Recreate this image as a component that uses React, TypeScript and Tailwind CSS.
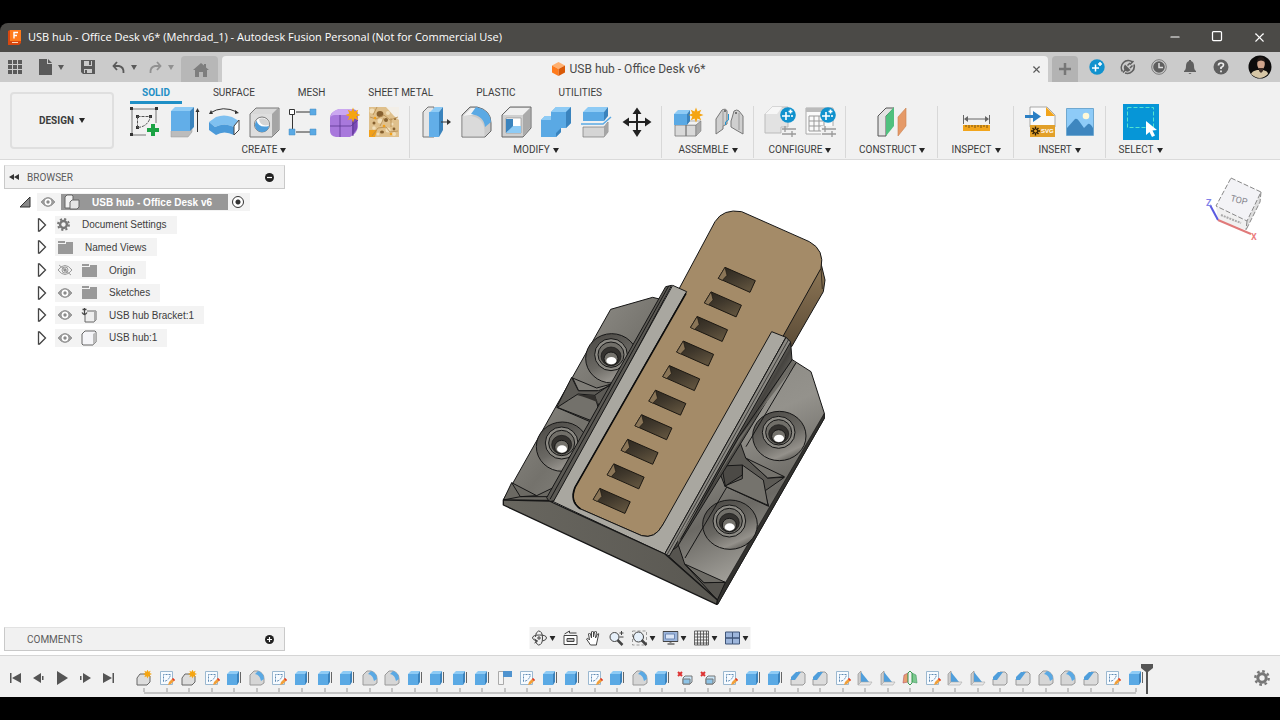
import React from 'react';
import { X, Minus, Square } from 'lucide-react';

type IconProps = { className?: string };

const Caret: React.FC<IconProps> = ({ className = 'text-neutral-800' }) => (
  <svg viewBox="0 0 6 5" className={`w-1.5 h-[5px] shrink-0 ${className}`} fill="currentColor"><path d="M0 0h6L3 5z" /></svg>
);

const Svg32: React.FC<{ children: React.ReactNode }> = ({ children }) => (
  <svg viewBox="0 0 32 32" className="w-8 h-8" fill="none">{children}</svg>
);

/* ---------- Ribbon icons ---------- */

const SketchIcon = () => (
  <Svg32>
    <path d="M4 3h24v14M4 3v26h14" stroke="#777" />
    <g fill="#333"><path d="M2 1h3v3H2zM27 1h3v3h-3zM2 27h3v3H2zM8 9h3v3H8zM21 9h3v3h-3zM8 20h3v3H8z" /></g>
    <path d="M9.500 10.500v11M9.500 10.500h13M10 21.500q10-1 12.500-11" stroke="#555" strokeDasharray="3 1" />
    <path d="M23 18h4v4h4v4h-4v4h-4v-4h-4v-4h4z" fill="#1ba344" />
  </Svg32>
);
const ExtrudeIcon = () => (
  <Svg32>
    <path d="M3 25l4-3h17v4l-4 5H3z" fill="#bcbcbc" stroke="#999" strokeWidth=".5" />
    <path d="M3 5l4-4h19l-4 4z" fill="#8ecbf5" />
    <path d="M3 5h19v20H3z" fill="#62aee8" />
    <path d="M22 5l4-4v20l-4 4z" fill="#3a83bd" />
    <path d="M29.500 26V4" stroke="#333" />
    <path d="M27.500 6l2-4 2 4z" fill="#333" />
  </Svg32>
);
const RevolveIcon = () => (
  <Svg32>
    <path d="M2 7q13-8 27-1" stroke="#333" />
    <path d="M1 8l2-4 2 4zM27 4l4 3-4 1z" fill="#333" />
    <path d="M1 16l7-5q8-3 16 0l7 4-5 6q-10-5-19 0z" fill="#7fc0f0" />
    <path d="M1 16l6 5q9-5 19 0v8q-10-5-18 0l-7-5z" fill="#4b9ad9" />
    <path d="M26 20l5-6v10l-5 5z" fill="#fff" stroke="#444" />
  </Svg32>
);
const HoleIcon = () => (
  <Svg32>
    <path d="M2 8l6-6h23v22l-7 7H2z" fill="#d8d8d8" stroke="#777" />
    <path d="M24 8l6-6v22l-6 7z" fill="#a5a5a5" />
    <path d="M3 8h21v22H3z" fill="#dedede" />
    <circle cx="14" cy="18.500" r="7.500" fill="#fff" stroke="#777" />
    <path d="M8.500 14.500q2 8 12.500 5.500a7 7 0 0 1-14 -2z" fill="#4f9edb" />
    <path d="M11 13q1 8 10 6a7 7 0 0 0-10-6z" fill="#d4d4d4" />
  </Svg32>
);
const PatternIcon = () => (
  <Svg32>
    <path d="M8 6h16M4.500 9v14M8 26h16" stroke="#333" />
    <path d="M1.500 3.500h5v5h-5z" fill="#fff" stroke="#333" />
    <path d="M22 3h6v6h-6zM22 23h6v6h-6zM1 23h6v6H1z" fill="#5aa9e4" stroke="#4b8dc0" strokeWidth=".5" />
  </Svg32>
);
const Burst = ({ x, y, r = 1 }: { x: number; y: number; r?: number }) => (
  <path transform={`translate(${x} ${y}) scale(${r})`} fill="#f5a512"
    d="M0-7.500L1.500-3.600 5.300-5.300 3.600-1.500 7.500 0 3.600 1.500 5.300 5.300 1.500 3.600 0 7.500-1.500 3.600-5.300 5.300-3.600 1.500-7.500 0-3.600-1.500-5.300-5.300-1.500-3.600z" />
);
const FormIcon = () => (
  <Svg32>
    <path d="M2 12q0-5 5-7l4-2h14q5 1 5 5v13q-1 5-5 8l-3 2H8q-6-1-6-6z" fill="#a878dc" />
    <path d="M2 12q2-8 9-9h14l-5 6H7q-4 0-5 3z" fill="#cba8f0" />
    <path d="M24 12l5-6v17l-5 7z" fill="#7a4bb5" />
    <path d="M12 9v22M2 20h21l7-6M25 8v22" stroke="#5c3690" strokeWidth=".8" />
    <Burst x={25} y={9} />
  </Svg32>
);
const VolumetricIcon = () => (
  <Svg32>
    <path d="M1 1h30v30H1z" fill="#dfc08c" />
    <path d="M18 1h13v13l-5-4z" fill="#f3efe8" />
    <path d="M1 24h8l-2 7H1z" fill="#f2a019" />
    <g fill="#86602f"><ellipse cx="12" cy="8" rx="3.400" ry="3" /><circle cx="18" cy="14" r="2" /><circle cx="6" cy="17" r="1.500" /><circle cx="26" cy="23" r="1.400" /><ellipse cx="14" cy="26" rx="2" ry="1.500" /><circle cx="27" cy="13" r="1" /></g>
    <g fill="#f1dfbb"><circle cx="4" cy="5" r="2.500" /><circle cx="12" cy="15" r="2.500" /><circle cx="20" cy="24" r="2.500" /><circle cx="20" cy="7" r="2" /><circle cx="6" cy="22" r="1.800" /><circle cx="26" cy="28" r="2" /><circle cx="24" cy="18" r="1.500" /><circle cx="10" cy="28" r="1.500" /></g>
    <g stroke="#b58a4c" strokeWidth=".8"><path d="M2 11l6 2 8-4 6 5 8-3M4 30l6-8 8-1 4 5 8-1M9 1l-4 8M16 12l-4 8M23 12v9" /></g>
    <g fill="#f2a019"><circle cx="7" cy="12" r="1.300" /><circle cx="16" cy="20" r="1.300" /><circle cx="23" cy="28" r="1.300" /></g>
  </Svg32>
);
const PressPullIcon = () => (
  <Svg32>
    <path d="M3 6l5-5h6v30H3z" fill="#e5e5e5" stroke="#777" />
    <path d="M10 6l5-5h8l-4 5z" fill="#8ecbf5" />
    <path d="M9 6h10v25H9z" fill="#62aee8" />
    <path d="M19 6l4-5v23l-4 7z" fill="#3a83bd" />
    <path d="M21 16h7" stroke="#333" />
    <path d="M27 13l4 3-4 3z" fill="#333" />
  </Svg32>
);
const FilletIcon = () => (
  <Svg32>
    <path d="M2 9l8-8h7q14 3 14 16v8l-6 6H2z" fill="#c9c9c9" stroke="#666" />
    <path d="M3 10l8-8h6l-4 7z" fill="#f2f2f2" />
    <path d="M2.500 10h9q12 2 13 14v6.500h-22z" fill="#dadada" />
    <path d="M11 8l5-7q14 3 15 15l-6 5Q24 10 11 8z" fill="#5aa9e4" />
  </Svg32>
);
const ShellIcon = () => (
  <Svg32>
    <path d="M2 9l8-8h21v21l-8 9H2z" fill="#cfcfcf" stroke="#666" />
    <path d="M3 9l7-7h20l-7 7z" fill="#efefef" />
    <path d="M23 9l7-7v20l-7 8z" fill="#aaa" />
    <path d="M6 12h15v15H6z" fill="#fff" stroke="#888" strokeWidth=".6" />
    <path d="M6 13h7v8l-7 6z" fill="#3a83bd" /><path d="M13 20h8v7H6z" fill="#8ecbf5" />
  </Svg32>
);
const CombineIcon = () => (
  <Svg32>
    <path d="M11 6l5-5h15v16l-5 5h-5v4l-5 5H1V14l4-4h6z" fill="#5aa9e4" />
    <path d="M11 6l5-5h15l-5 5zM1 14l4-4h6v4z" fill="#8ecbf5" />
    <path d="M26 6l5-5v16l-5 5zM16 27l5-5v4l-5 5z" fill="#3a83bd" />
  </Svg32>
);
const SplitIcon = () => (
  <Svg32>
    <path d="M3 6l5-5h20l-4 5z" fill="#8ecbf5" />
    <path d="M3 6h21v9H3z" fill="#5aa9e4" /><path d="M24 6l4-5v9l-4 5z" fill="#3a83bd" />
    <path d="M1 18h22l8-7" stroke="#5aa9e4" strokeWidth="1.500" />
    <path d="M3 21h21l4-5v10l-4 5H3z" fill="#d5d5d5" stroke="#777" strokeWidth=".7" />
    <path d="M24 21l4-5v10l-4 5z" fill="#a5a5a5" />
  </Svg32>
);
const MoveIcon = () => (
  <Svg32>
    <path d="M17 6v21M6 16h22" stroke="#222" strokeWidth="2" />
    <path d="M12.500 8L17 1.500 21.500 8zM12.500 24l4.500 7 4.500-7zM9 11.500L2.500 16 9 20.500zM25 11.500l6.500 4.500-6.500 4.500z" fill="#222" />
  </Svg32>
);
const ComponentIcon = () => (
  <Svg32>
    <path d="M3 19h11v11H3zM14 19h10v11H14z" fill="#d9d9d9" stroke="#777" strokeWidth=".8" />
    <path d="M14 19l4-4h11l-5 4z" fill="#f2f2f2" stroke="#777" strokeWidth=".5" />
    <path d="M24 19l5-4v10l-5 5z" fill="#aaa" stroke="#777" strokeWidth=".5" />
    <path d="M2 8l4-4h12l-3 4z" fill="#8ecbf5" /><path d="M2 8h13v11H2z" fill="#5aa9e4" /><path d="M15 8l3-4v11l-3 4z" fill="#3a83bd" />
    <Burst x={24} y={9} />
  </Svg32>
);
const JointIcon = () => (
  <Svg32>
    <path d="M4 13l6-9q4-2 5 1v13l-4 2v3l-7 5z" fill="#cfcfcf" stroke="#777" />
    <path d="M20 12l2-7q3-2 5 0l4 5v18l-7-4-5-3v-6z" fill="#cfcfcf" stroke="#777" />
    <path d="M11 5v15M27 7v17" stroke="#999" />
    <path d="M13.500 19v-3l3-2V8" stroke="#2196d3" />
    <circle cx="13" cy="5" r="1" fill="#555" /><circle cx="24" cy="7" r="1" fill="#555" />
  </Svg32>
);
const Plus2 = () => (
  <g><circle cx="24" cy="9" r="7.800" fill="#1192ce" /><path d="M22 6v8M18 10h8M26.500 3.500v4M24.500 5.500h4M28 9v2" stroke="#fff" strokeWidth="1.600" /></g>
);
const Sliders = () => <path d="M18 23h14M18 28h14M21 20v6M28 25v6" stroke="#999" strokeWidth="1.300" />;
const ConfigureIcon = () => (
  <Svg32>
    <path d="M1 8l7-7h16v20h-7v6H1z" fill="#e2e2e2" stroke="#bbb" />
    <path d="M1 8l7-7h10l-5 7z" fill="#f6f6f6" />
    <Sliders /><Plus2 />
  </Svg32>
);
const ConfigTableIcon = () => (
  <Svg32>
    <path d="M2 2h27v26H2z" fill="#fafafa" stroke="#aaa" />
    <path d="M2 2h27v4H2z" fill="#bbb" />
    <path d="M5 10h17M5 15h14M5 20h14M5 25h12M5 10v15M10 10v15M15 10v15M20 10v10" stroke="#999" />
    <path d="M17 20h15v12H17z" fill="#f1f1f1" />
    <Sliders /><Plus2 />
  </Svg32>
);
const PlaneIcon = () => (
  <Svg32>
    <path d="M2 10l8-8h8L10 10v20H2z" fill="#e3e3e3" stroke="#555" />
    <path d="M10 10l8-9v19l-8 10z" fill="#4fc07d" />
    <path d="M22 11l8-9v18l-8 10z" fill="#e59a68" stroke="#c9824f" strokeWidth=".6" />
  </Svg32>
);
const MeasureIcon = () => (
  <Svg32>
    <path d="M3.500 9v9M29.500 9v9M6 13h22" stroke="#666" />
    <path d="M4 13l4-3v6zM29 13l-4-3v6z" fill="#666" />
    <path d="M3 19h27v6H3z" fill="#f2a51c" />
    <path d="M6 19v2M9 19v3M12 19v2M15 19v3M18 19v2M21 19v3M24 19v2M27 19v3" stroke="#7b5310" />
  </Svg32>
);
const InsertSvgIcon = () => (
  <Svg32>
    <path d="M6 1h17l8 8v12H6z" fill="#fafafa" stroke="#888" strokeWidth=".7" />
    <path d="M22 1l9 9h-9z" fill="#f2a51c" />
    <path d="M1 9h8V5l8 5.500L9 16v-4H1z" fill="#2b7fc4" />
    <path d="M6 19h25v12H6z" fill="#e2a02a" />
    <path d="M11.500 20.500v9M7 25h9M8.500 22l6 6M14.500 22l-6 6" stroke="#2b1c05" strokeWidth="1.400" />
    <circle cx="11.500" cy="25" r="2" fill="#e2a02a" stroke="#2b1c05" />
    <text x="17" y="27" fontSize="6" fontWeight="700" fill="#fff" fontFamily="Liberation Sans, sans-serif">SVG</text>
  </Svg32>
);
const CanvasIcon = () => (
  <Svg32>
    <path d="M2.500 2.500h27v27h-27z" fill="#8ecbf8" stroke="#6fa8d0" />
    <path d="M3 22l8-9q2-1 4 2l5 7 4-4q2-1 5 4v7H3z" fill="#3e86bf" />
    <circle cx="22" cy="10" r="3.300" fill="#fff8d8" />
  </Svg32>
);
const SelectIcon = () => (
  <span className="flex w-9 h-9 items-center justify-center bg-[#0696d7]">
    <Svg32>
      <path d="M2.500 1.500h26v20h-26z" stroke="#54e3d0" strokeDasharray="4 2" />
      <path d="M21 15v14l3.500-3 2.500 5 3-1.500-2.500-5 4.500-.5z" fill="#fff" />
    </Svg32>
  </span>
);

const groups = [
  { label: 'CREATE', icons: [SketchIcon, ExtrudeIcon, RevolveIcon, HoleIcon, PatternIcon, FormIcon, VolumetricIcon] },
  { label: 'MODIFY', icons: [PressPullIcon, FilletIcon, ShellIcon, CombineIcon, SplitIcon, MoveIcon] },
  { label: 'ASSEMBLE', icons: [ComponentIcon, JointIcon] },
  { label: 'CONFIGURE', icons: [ConfigureIcon, ConfigTableIcon] },
  { label: 'CONSTRUCT', icons: [PlaneIcon] },
  { label: 'INSPECT', icons: [MeasureIcon] },
  { label: 'INSERT', icons: [InsertSvgIcon, CanvasIcon] },
  { label: 'SELECT', icons: [SelectIcon] },
];

const ribbonTabs = ['SOLID', 'SURFACE', 'MESH', 'SHEET METAL', 'PLASTIC', 'UTILITIES'];

/* ---------- Title bar and document tabs ---------- */

const TitleBar = () => (
  <header className="flex h-[29px] items-center rounded-tl-lg bg-[#4b4a47] pl-2 text-white">
    <svg viewBox="0 0 13 15" className="w-[13px] h-[15px] mr-[7px]">
      <path d="M0 1l2-1h11v13l-2 2H0z" fill="#d9480f" /><path d="M2 0h11v11H2z" fill="#ff7a1a" />
      <path d="M6 8.500V2.500h4M6 5.500h3" stroke="#fff" strokeWidth="1.400" fill="none" />
      <path d="M4 12.500h6" stroke="#ffd9bd" />
    </svg>
    <h1 className="font-['Open_Sans',sans-serif] text-[11px] whitespace-nowrap">USB hub - Office Desk v6* (Mehrdad_1) - Autodesk Fusion Personal (Not for Commercial Use)</h1>
    <div className="ml-auto flex">
      <button aria-label="Minimize" className="flex w-[42px] justify-center"><Minus size={14} strokeWidth={2} /></button>
      <button aria-label="Maximize" className="flex w-[42px] justify-center"><Square size={12} strokeWidth={2.500} /></button>
      <button aria-label="Close" className="flex w-[42px] justify-center"><X size={15} strokeWidth={1.700} /></button>
    </div>
  </header>
);

const TopBar = () => (
  <div className="flex h-[30px] items-end bg-[#cbcbcb] text-[#5a5a5a]">
    <div className="flex h-full w-[181px] shrink-0 items-center pl-2">
      <button aria-label="Data panel">
        <svg viewBox="0 0 14 14" className="w-3.5 h-3.5" fill="currentColor"><path d="M0 0h4v4H0zM5 0h4v4H5zM10 0h4v4h-4zM0 5h4v4H0zM5 5h4v4H5zM10 5h4v4h-4zM0 10h4v4H0zM5 10h4v4H5zM10 10h4v4h-4z" /></svg>
      </button>
      <button aria-label="File" className="ml-[17px] flex items-center gap-1.5">
        <svg viewBox="0 0 13 16" className="w-[13px] h-4" fill="currentColor"><path d="M0 0h8v5h5v11H0z" /><path d="M9 0l4 4H9z" /></svg>
        <Caret className="text-[#5a5a5a]" />
      </button>
      <button aria-label="Save" className="ml-[17px]">
        <svg viewBox="0 0 14 14" className="w-3.5 h-3.5" fill="currentColor"><path fillRule="evenodd" d="M0 0h14v14H2l-2-2zM3 1v5h8V1zM3 9v4h8V9z" /><path d="M8 1h2v4H8zM4 10h2v3H4z" /></svg>
      </button>
      <button aria-label="Undo" className="ml-[17px] flex items-center gap-1.5">
        <svg viewBox="0 0 13 13" className="w-[13px] h-[13px]" fill="none" stroke="currentColor" strokeWidth="1.800"><path d="M5 1L1.500 5 5 9M2 5h5q5 1 4.500 7" /></svg>
        <Caret className="text-[#5a5a5a]" />
      </button>
      <button aria-label="Redo" className="ml-3 flex items-center gap-1.5 text-[#919191]">
        <svg viewBox="0 0 13 13" className="w-[13px] h-[13px]" fill="none" stroke="currentColor" strokeWidth="1.800"><path d="M8 1l3.500 4L8 9M11 5H6Q1 6 1.500 12" /></svg>
        <Caret className="text-[#919191]" />
      </button>
    </div>
    <button aria-label="Home" className="flex h-[26px] w-[37px] shrink-0 items-center justify-center rounded-t bg-[#b7b7b7] pt-0.5 pl-0.5 text-[#7e7e7e]">
      <svg viewBox="0 0 16 14" className="w-4 h-3.5" fill="currentColor"><path d="M8 0L0 7h2v7h4V9h4v5h4V7h2l-3-2.600V1h-2v1.600z" /></svg>
    </button>
    <div className="ml-1 flex h-[26px] flex-1 items-center rounded-t bg-[#f1f1f1] pr-1.5">
      <button className="flex flex-1 items-center justify-center gap-[5px] pl-1 font-[Roboto,sans-serif] text-xs text-[#4a4a4a]">
        <svg viewBox="0 0 13 14" className="w-[13px] h-3.5"><path d="M6.500 0L13 3.500 6.500 7 0 3.500z" fill="#ffb070" /><path d="M0 3.500L6.500 7v7L0 10.500z" fill="#ff7b1c" /><path d="M13 3.500L6.500 7v7l6.500-3.500z" fill="#d95a08" /></svg>
        USB hub - Office Desk v6*
      </button>
      <button aria-label="Close tab"><X size={11} strokeWidth={2.500} /></button>
    </div>
    <button aria-label="New tab" className="ml-1 flex h-[26px] w-[26px] items-center justify-center rounded-t bg-[#b3b3b3]">
      <svg viewBox="0 0 12 12" className="w-3 h-3" stroke="#777" strokeWidth="2.500"><path d="M6 0v12M0 6h12" /></svg>
    </button>
    <div className="flex h-full w-[202px] shrink-0 items-center gap-[15px] pl-[11px]">
      <button aria-label="Extensions"><svg viewBox="0 0 16 16" className="w-4 h-4"><circle cx="8" cy="8" r="7.700" fill="#1192ce" /><path d="M6.500 5.500v7M3 9h7M11 3v4M9 5h4" stroke="#fff" strokeWidth="1.500" /></svg></button>
      <button aria-label="Online status"><svg viewBox="0 0 16 16" className="w-4 h-4" fill="none"><path d="M2.500 12.500a7 7 0 0 1 10-9.500M14 5.500a7 7 0 0 1-9 8.500" stroke="#5f5f5f" strokeWidth="1.600" /><path d="M5 5.500l5.500 5.500q-3 3-5.500.5T5 5.500z" fill="#5f5f5f" /><path d="M3 13.500L6 10M7.500 6.500L10 4M10 9l2.500-2.500M10 5.500L13.500 2" stroke="#5f5f5f" strokeWidth="1.500" /></svg></button>
      <button aria-label="Job status"><svg viewBox="0 0 16 16" className="w-4 h-4" fill="none"><circle cx="8" cy="8" r="7.300" stroke="#7a7a7a" /><circle cx="8" cy="8" r="5.800" fill="#5f5f5f" /><path d="M8 4v4.500h4" stroke="#ddd" strokeWidth="1.500" /></svg></button>
      <button aria-label="Notifications"><svg viewBox="0 0 16 16" className="w-4 h-4" fill="#5f5f5f"><path d="M7 1h2v1q3 1 3 5 0 4 2 5v1H2v-1q2-1 2-5 0-4 3-5zM6.500 14h3q-1.500 2-3 0z" /></svg></button>
      <button aria-label="Help"><svg viewBox="0 0 16 16" className="w-4 h-4"><circle cx="8" cy="8" r="7.500" fill="#5f5f5f" /><path d="M5.500 6.500q0-2.500 2.500-2.500t2.500 2q0 1.500-2.500 2.500v1.500M8 11.500v1.700" stroke="#eee" strokeWidth="1.700" fill="none" /></svg></button>
      <button aria-label="Account" className="ml-1">
        <svg viewBox="0 0 24 24" className="w-6 h-6">
          <circle cx="12" cy="12" r="11.500" fill="#0c0b0b" />
          <path d="M3 19q1-3 6-4h6q5 1 5 4-8 8-17 0z" fill="#d6c6a6" />
          <ellipse cx="13" cy="9" rx="3.800" ry="5.500" fill="#cfa48c" /><path d="M9 7q0-5 4-5t4 5q-4-3-8 0z" fill="#241a17" />
          <path d="M11 13h4v3l-2 2-2-2z" fill="#3a2a24" />
        </svg>
      </button>
    </div>
  </div>
);

const Ribbon = () => (
  <div className="flex h-[78px] border-b border-[#dadada] bg-[#f1f1f1] font-[Roboto,sans-serif] text-[10px] leading-3 text-[#3c3c3c]">
    <button className="mt-2.5 ml-2.5 flex h-[57px] w-[104px] shrink-0 items-center justify-center gap-[5px] rounded border-2 border-[#dfdfdf] font-bold">
      DESIGN <Caret />
    </button>
    <div className="flex flex-1 flex-col pl-1">
      <nav className="ml-3 flex gap-[19px]">
        {ribbonTabs.map((tab, i) => (
          <button key={tab} className={`h-[22px] border-b-[3px] px-3 pt-0.5 whitespace-nowrap ${i === 0 ? 'border-[#1f8fc6] font-bold text-[#1f8fc6]' : 'border-transparent'}`}>{tab}</button>
        ))}
      </nav>
      <div className="mt-0.5 flex">
        {groups.map((g) => (
          <div key={g.label} className="flex flex-col items-center border-r border-[#d8d8d8] pr-[9px] pl-2.5 last:border-0">
            <div className="flex h-8 items-center gap-2">
              {g.icons.map((Icon, i) => <button key={i} aria-label={`${g.label} tool ${i + 1}`}><Icon /></button>)}
            </div>
            <button className="mt-1.5 flex items-center gap-[3px] px-[3px] pb-0.5">{g.label} <Caret /></button>
          </div>
        ))}
      </div>
    </div>
  </div>
);

/* ---------- Browser tree ---------- */

const Eye: React.FC<{ off?: boolean }> = ({ off }) => (
  <svg viewBox="0 0 16 12" className="w-4 h-3 shrink-0" fill="none">
    <path d="M1 6q7-9 14 0-7 9-14 0z" fill={off ? 'none' : '#9a9a9a'} stroke="#9a9a9a" />
    <circle cx="8" cy="6" r="3" fill={off ? 'none' : '#fff'} stroke={off ? '#9a9a9a' : '#fff'} /><circle cx="8" cy="6" r="1.700" fill="#8a8a8a" />
    {off && <path d="M2 1l12 10" stroke="#9a9a9a" />}
  </svg>
);
const Folder = () => <svg viewBox="0 0 16 13" className="w-4 h-[13px]" fill="#999"><path d="M1 0h7v2H1zM1 3h8V1h7v12H1z" /></svg>;
const Gear: React.FC<IconProps> = ({ className = 'w-[13px] h-[13px]' }) => (
  <svg viewBox="0 0 16 16" className={className} fill="none" stroke="#777">
    <circle cx="8" cy="8" r="4.200" strokeWidth="3" />
    <circle cx="8" cy="8" r="6.700" strokeWidth="2.400" strokeDasharray="2.630 2.630" />
  </svg>
);
const Body = () => (
  <svg viewBox="0 0 16 16" className="w-4 h-4"><path d="M1 4l3-3h10l1 1v10l-3 3H2l-1-1z" fill="#f5f5f8" stroke="#666" /><path d="M12 4l3-2v10l-3 3z" fill="#bbb" /></svg>
);
const Grounded = () => (
  <svg viewBox="0 0 16 16" className="w-4 h-4" fill="none"><path d="M6 4h9v9l-2 2H4V8" fill="#eee" stroke="#666" /><path d="M13 5l2-1v9l-2 2z" fill="#aaa" /><path d="M3.500 1v7M1 5.500q2.500 4 5 0M1.500 2.500h4" stroke="#444" strokeWidth="1.300" /></svg>
);

const treeItems = [
  { name: 'Document Settings', icon: <Gear /> },
  { name: 'Named Views', icon: <Folder /> },
  { name: 'Origin', eye: 'off', icon: <Folder /> },
  { name: 'Sketches', eye: 'on', icon: <Folder /> },
  { name: 'USB hub Bracket:1', eye: 'on', icon: <Grounded /> },
  { name: 'USB hub:1', eye: 'on', icon: <Body /> },
];

const PanelHeader: React.FC<{ title: string; open?: boolean }> = ({ title, open }) => (
  <div className="flex h-6 items-center border border-[#c9c9c9] border-t-[#e2e2e2] bg-[#f1f1f1] pr-2.5 pl-1 font-[Roboto,sans-serif] text-[10px] text-[#5c5c5c]">
    <span className="w-[18px]">
      {open && <svg viewBox="0 0 10 6" className="w-2.5 h-1.5" fill="#333"><path d="M5 0v6L0 3zM10 0v6L5 3z" /></svg>}
    </span>
    {title}
    <button aria-label={open ? 'Collapse' : 'Expand'} className="ml-auto">
      <svg viewBox="0 0 9 9" className="w-[9px] h-[9px]"><circle cx="4.500" cy="4.500" r="4.500" fill="#222" /><path d={open ? 'M2 4.500h5' : 'M2 4.500h5M4.500 2v5'} stroke="#fff" strokeWidth="1.200" /></svg>
    </button>
  </div>
);

const BrowserTree = () => (
  <ul className="mt-0.5 flex h-[158px] flex-col font-['Liberation_Sans',Arial,sans-serif] text-[10px] text-[#3d3d3d]">
    <li className="flex flex-1 items-center pl-[15px]">
      <svg viewBox="0 0 12 12" className="w-3 h-3"><path d="M11 1v10H1z" fill="#888" stroke="#333" /></svg>
      <div className="ml-1.5 flex h-[18px] items-center bg-[#f3f3f3] pr-1.5 pl-[3px]">
        <Eye />
        <button className="ml-[5px] flex h-4 items-center bg-[#979797] pr-4 pl-[3px] font-bold text-white">
          <svg viewBox="0 0 16 16" className="mr-3 w-4 h-4"><path d="M1 3l2-2h5l1 1v12H1z" fill="#f3f3f3" stroke="#666" /><path d="M6 8l2-2h7v7l-2 2H6z" fill="#e6e6e6" stroke="#666" /></svg>
          USB hub - Office Desk v6
        </button>
        <input type="radio" defaultChecked aria-label="Activate component" className="ml-1 h-3 w-3 appearance-none rounded-full border border-[#333] bg-[radial-gradient(circle,#333_2px,white_3px)]" />
      </div>
    </li>
    {treeItems.map((item) => (
      <li key={item.name} className="flex flex-1 items-center pl-[33px]">
        <button aria-label={`Expand ${item.name}`}>
          <svg viewBox="0 0 10 14" className="w-2.5 h-3.5"><path d="M1.500 1h1l6 6-6 6h-1z" fill="#fdfdfd" stroke="#444" strokeWidth="1.300" /></svg>
        </button>
        <div className="ml-2 flex h-[18px] items-center bg-[#f3f3f3] pr-2.5 pl-0.5">
          {item.eye && <span className="mr-2"><Eye off={item.eye === 'off'} /></span>}
          {item.icon}
          <span className="ml-3">{item.name}</span>
        </div>
      </li>
    ))}
  </ul>
);

/* ---------- 3D model ---------- */

const slots = Array.from({ length: 10 }, (_, i) => ({ x: -41.700 * i, y: 73.700 * i }));

const Boss = ({ x, y, r }: { x: number; y: number; r: number }) => (
  <g transform={`translate(${x} ${y})`}>
    <ellipse cx="2" cy="11" rx={r} ry="74" fill="url(#boss)" stroke="#161616" strokeWidth="3" />
    <ellipse rx="49" ry="48" fill="#8b8983" stroke="#161616" strokeWidth="3" />
    <ellipse rx="39" ry="38" fill="#716f69" stroke="#161616" strokeWidth="3" />
    <ellipse cy="5" rx="30" ry="28" fill="#34322f" stroke="#161616" strokeWidth="2" />
    <ellipse cy="12" rx="21" ry="20" fill="#75736d" stroke="#161616" strokeWidth="3" />
    <ellipse cx="1" cy="18" rx="15" ry="11" fill="#fff" />
  </g>
);

const Model = () => (
  <svg viewBox="0 0 1050 1230" className="absolute top-[40px] left-[490px] h-[410px] w-[350px]" strokeLinejoin="round" fill="none">
    <defs>
      <linearGradient id="wingL" x1="0" y1="0" x2="1" y2="1"><stop offset="0" stopColor="#777570" /><stop offset=".3" stopColor="#8b8983" /><stop offset=".55" stopColor="#74726c" /><stop offset="1" stopColor="#9b9993" /></linearGradient>
      <linearGradient id="wingR" x1=".3" y1="0" x2=".6" y2="1"><stop offset="0" stopColor="#8b8983" /><stop offset=".3" stopColor="#94928c" /><stop offset=".6" stopColor="#6b6964" /><stop offset=".85" stopColor="#a09e98" /><stop offset="1" stopColor="#77756f" /></linearGradient>
      <linearGradient id="boss" x1=".2" y1="0" x2=".7" y2="1"><stop offset="0" stopColor="#4c4a46" /><stop offset=".55" stopColor="#6a6863" /><stop offset=".85" stopColor="#94918b" /><stop offset="1" stopColor="#5e5c57" /></linearGradient>
      <linearGradient id="railSide" gradientUnits="userSpaceOnUse" x1="720" y1="690" x2="780" y2="725"><stop offset="0" stopColor="#85837d" /><stop offset=".5" stopColor="#45433f" /><stop offset="1" stopColor="#63615c" /></linearGradient>
      <linearGradient id="slot" x1="0" y1="0" x2=".6" y2="1"><stop offset="0" stopColor="#2a251d" /><stop offset=".5" stopColor="#40382c" /><stop offset="1" stopColor="#5f523d" /></linearGradient>
      <linearGradient id="hubSide" x1="0" y1="0" x2="0" y2="1"><stop offset="0" stopColor="#8e7756" /><stop offset="1" stopColor="#5c4c37" /></linearGradient>
      <linearGradient id="front" x1="0" y1="0" x2="1" y2="0"><stop offset="0" stopColor="#68665f" /><stop offset="1" stopColor="#5a5852" /></linearGradient>
    </defs>

    {/* Left wing */}
    <path d="M40 900L362 328 488 292 520 300 190 905z" fill="url(#wingL)" stroke="#161616" strokeWidth="3" />
    <Boss x={363} y={464} r={78} />
    <Boss x={215} y={729} r={78} />
    <path d="M245 532L265 572 320 572 378 545 330 640 300 665 200 622z" fill="#5c5a55" stroke="#161616" strokeWidth="3" />
    <path d="M248 534l72 30 60-16-54 24h-60z" fill="#807e78" stroke="#161616" strokeWidth="3" />
    <path d="M236 600l28-18 50 4 12 42-22 34-102-40z" fill="#73716b" stroke="#161616" strokeWidth="3" />
    <path d="M258 584l56 2 10 22q-26-14-66-24z" fill="#32302d" />
    <path d="M314 586l52-36M324 610l12 20" stroke="#161616" strokeWidth="3" />
    <path d="M65 848l75 39 62-30-22 44-140-1z" fill="#6b6963" stroke="#161616" strokeWidth="3" />
    <path d="M65 848l26 42 49-3M40 900l51-10h88" stroke="#161616" strokeWidth="3" />

    {/* Right wing */}
    <path d="M905 478L963 515 1003 640 1003 655 683 1213 535 1068z" fill="url(#wingR)" stroke="#161616" strokeWidth="3" />
    <path d="M1003 640v15L683 1213l-2-22z" fill="#32312e" stroke="#161616" strokeWidth="2" />
    <Boss x={866} y={697} r={80} />
    <Boss x={718} y={963} r={82} />
    <path d="M745 712l22 62 66 60 50-2-60 42 13 45-131-60-24-62z" fill="#5c5a55" stroke="#161616" strokeWidth="3" />
    <path d="M767 774l116 56-50 4zM757 795l63 45 14 76-130-58 53-22z" fill="#75736d" stroke="#161616" strokeWidth="3" />
    <path d="M695 798l62-3v30l-51 33z" fill="#4c4a46" stroke="#161616" strokeWidth="3" />
    <path d="M562 1026l22 66 58 56 64-1-24 53L535 1068z" fill="#56544f" stroke="#161616" strokeWidth="3" />
    <path d="M584 1092l122 55-64 1zM584 1092l96 106" fill="#6e6c66" stroke="#161616" strokeWidth="3" />

    {/* USB hub body */}
    <path d="M993 190L1005 240 1000 275 905 440 870 420z" fill="url(#hubSide)" stroke="#161616" strokeWidth="3" />
    <path d="M993 205l4 62" stroke="#3a3023" strokeWidth="3" />
    <path d="M675 65Q700 25 755 35L958 125Q1005 150 993 205L870 425 518 975Q495 1018 455 1007L272 927Q240 905 252 865L568 265z" fill="#a48b68" stroke="#161616" strokeWidth="3" />
    {slots.map((s, i) => (
      <g key={i} transform={`translate(${s.x} ${s.y})`}>
        <path d="M705 202l91 40-16 35-95-42z" fill="url(#slot)" stroke="#1c1812" strokeWidth="3" />
        <path d="M705 202l6 24-14 15-12-6z" fill="#8a7557" stroke="#1c1812" strokeWidth="2" />
      </g>
    ))}

    {/* Rails and frame */}
    <path d="M545 256l-18 4L170 893l8 12 20-4z" fill="#5b5954" stroke="#161616" strokeWidth="3" />
    <path d="M548 256L590 275 255 862Q238 905 272 927L455 1007Q495 1018 518 975L845 395 888 412 524 1062 190 905z" fill="#a9a7a0" stroke="#161616" strokeWidth="3" />
    <path d="M588 280L255 862Q238 905 272 927" stroke="#0c0c0c" strokeWidth="5" />
    <path d="M536 258L180 898" stroke="#161616" strokeWidth="3" />
    <path d="M888 412l14 16 4 52-344 560-38 28z" fill="url(#railSide)" stroke="#161616" strokeWidth="3" />
    <path d="M888 412l14 14L538 1068l-14-6z" fill="#8b8983" stroke="#161616" strokeWidth="3" />
    <path d="M895 420L531 1064" stroke="#161616" strokeWidth="2" />
    <path d="M905 480l15 10-174 226-182 312-2-10z" fill="#6f6d67" />
    <path d="M906 480L746 712 572 1018M918 488L768 740M710 862l-125 212" stroke="#161616" strokeWidth="3" />

    {/* Front face */}
    <path d="M40 900l138 3 347 159 157 138-2 13L40 915z" fill="url(#front)" stroke="#161616" strokeWidth="4" />
  </svg>
);

const ViewCube = () => (
  <svg viewBox="0 0 90 90" className="absolute top-0 right-0 h-[90px] w-[90px]" fill="none">
    <path d="M26 46l31 15-1 9-28-10z" fill="#f0f0f0" /><path d="M71 32l-1 10-14 28 1-9z" fill="#dedede" />
    <path d="M41 18l30 14-14 29-31-15z" fill="#f3f3f6" />
    <path d="M41 18l30 14-14 29-31-15zM71 32l-1 10-14 28M57 61l-1 9" stroke="#888" strokeDasharray="5 2" />
    <path d="M31 55l20 8" stroke="#aaa" strokeWidth="2" strokeDasharray="2 1" />
    <path d="M28 60l-8-15" stroke="#5a5ae0" strokeWidth="2" /><path d="M28 60l33 14" stroke="#e07a7a" strokeWidth="2" />
    <g fontFamily="Roboto, sans-serif">
      <text x="40" y="41" fontSize="9" fill="#85858c" transform="rotate(14 40 41)">TOP</text>
      <text x="16" y="46" fontSize="9" fontWeight="700" fill="#8080e8">Z</text><text x="61" y="80" fontSize="9" fontWeight="700" fill="#ec8080">X</text>
    </g>
  </svg>
);

/* ---------- Navigation bar ---------- */

const navTools = [
  { name: 'Orbit', caret: true, art: <><path d="M6 11q-5-1-5-3 0-3 7-3t7 3q0 2-4 3" /><path d="M7 1q4 0 4 7t-4 7q-3-1-3-5M4 7q0-5 3-6" /><path d="M3 9l3 2-3 2M7.500 6v4M5.500 8h4" /></> },
  { name: 'Look at', art: <><path d="M1.500 5.500h13v9h-13z" fill="#fff" /><path d="M4.500 8.500h7v3h-7z" fill="#bbb" /><path d="M2 4l5-3v2h7" /></> },
  { name: 'Pan', art: <path d="M5 15l-4-6q1-2 3 1L3 4q1-2 2 0l1 4V2q1-2 2 0v5l1-5q1-2 2 0l-1 6 2-4q2-1 1 1l-2 9v1z" fill="#fff" /> },
  { name: 'Zoom', art: <><circle cx="6" cy="7" r="4.500" fill="#e6f0fa" /><path d="M9 10l5 5" strokeWidth="2.500" /><path d="M13 1v4M11 3h4M11 7h4" /></> },
  { name: 'Fit', caret: true, art: <><path d="M1 1h14v14H1z" strokeDasharray="3 2" stroke="#999" /><circle cx="7" cy="7" r="5" fill="#e6f0fa" /><path d="M10 10l5 5" strokeWidth="2.500" /></> },
  { name: 'Display settings', caret: true, art: <><path d="M.5 1.500h15v10H.5z" fill="#9db6dc" /><path d="M3 4h9v5H3z" fill="#dbe6f7" stroke="#6d87b3" /><path d="M5 14h7M8 12v2" strokeWidth="2" stroke="#888" /></> },
  { name: 'Grid', caret: true, art: <path d="M1 1h14v14H1zM1 4h14M1 7h14M1 10h14M1 13h14M4 1v14M7 1v14M10 1v14M13 1v14" strokeWidth=".8" /> },
  { name: 'Viewports', caret: true, art: <path d="M1 2h7v6H1zM8 2h7v6H8zM1 8h7v6H1zM8 8h7v6H8z" fill="#9db6dc" stroke="#3f5578" /> },
];

const NavBar = () => (
  <div className="absolute bottom-1.5 left-1/2 flex h-[22px] -translate-x-1/2 items-center gap-[7px] bg-[#efefef] px-0.5">
    {navTools.map((t) => (
      <button key={t.name} aria-label={t.name} className="flex items-center gap-0.5">
        <svg viewBox="0 0 16 16" className="w-4 h-4" fill="none" stroke="#444">{t.art}</svg>
        {t.caret && <Caret />}
      </button>
    ))}
  </div>
);

/* ---------- Timeline ---------- */

const featureArt: Record<string, React.ReactNode> = {
  n: <><path d="M1 8l3-4h8l2 2v6l-3 3H1z" fill="#ddd" stroke="#666" /><Burst x={11.5} y={4} r={0.6} /></>,
  s: <><path d="M1.500 1.500h12v13h-12z" fill="#f7fbff" stroke="#9bb8d0" /><path d="M4.500 11.500v-7h7q-1 6-7 7z" stroke="#5f8ab3" strokeDasharray="2 1" /><path d="M9 15l1-3 4-4 2 2-4 4z" fill="#f2a03a" /><path d="M13 9l1-1 2 2-1 1z" fill="#d33" /></>,
  e: <><path d="M1 4l3-3h9l-2 3z" fill="#8ecbf5" /><path d="M1 4h10v11H1z" fill="#5aa9e4" /><path d="M11 4l2-3v11l-2 3z" fill="#3a83bd" /><path d="M14.500 2v11" stroke="#666" /></>,
  f: <><path d="M1 5l4-4h4q6 2 6 8v4l-3 2H1z" fill="#d6d6d6" stroke="#999" /><path d="M6 4l3-3q6 2 6 8l-3 2Q11 5 6 4z" fill="#5aa9e4" /></>,
  c: <><path d="M1 9l7-7h5l2 2v9l-2 2H1z" fill="#dcdcdc" stroke="#999" /><path d="M1 7l5-5h5l-6 8H1z" fill="#4f9edb" /></>,
  g: <><path d="M1.500 1.500h5v13h-5z" fill="#f5f5f5" stroke="#aaa" /><path d="M6 1h9v6H6z" fill="#4f93cf" /></>,
  x: <><path d="M1 2l4 4M5 2L1 6" stroke="#d33" strokeWidth="2" /><path d="M6 8l2-2h7v6l-2 2H6z" fill="#c9e4f5" stroke="#777" /><path d="M6 9h7v5H6z" fill="#8dc3e6" stroke="#777" /></>,
  r: <><path d="M1 4l3-3v11l-3 3z" fill="#ccc" stroke="#888" strokeWidth=".6" /><path d="M4 2l8 10-8 1z" fill="#4f9edb" /><path d="M1 15l3-3h11l-2 3z" fill="#e8e8e8" stroke="#aaa" strokeWidth=".6" /></>,
  m: <><path d="M2 5l4-2v9l-5 1z" fill="#e8a070" stroke="#b56" strokeWidth=".6" /><path d="M10 3l4 2 1 8-5-1z" fill="#7cc98e" stroke="#496" strokeWidth=".6" /><path d="M6 3l2-2 2 2v10l-2 2-2-2z" fill="#f2f2f2" stroke="#3a9d50" /></>,
};

const features = 'nsnsefseeeffeeeegseesefexxseeccsrrmsrrccffcse'.split('');

const playback = [
  { name: 'Go to start', d: 'M1 2h1.500v10H1zM12 2v10L3 7z' },
  { name: 'Step back', d: 'M9 2v10L1 7zM10 5h1.500v4H10z' },
  { name: 'Play', d: 'M2 0l11 7-11 7z' },
  { name: 'Step forward', d: 'M5 2v10l8-5zM2 5h1.500v4H2z' },
  { name: 'Go to end', d: 'M2 2v10l9-5zM11.500 2H13v10h-1.500z' },
];

const Timeline = () => (
  <footer className="flex h-[42px] items-start border-t border-[#d5d5d5] bg-[#f1f1f1] pl-1">
    <div className="flex pt-[15px]">
      {playback.map((p) => (
        <button key={p.name} aria-label={p.name} className="flex w-[23px] justify-center">
          <svg viewBox="0 0 14 14" className="w-3.5 h-3.5" fill="#555"><path d={p.d} /></svg>
        </button>
      ))}
    </div>
    <ol className="ml-3.5 flex w-[1014px] pt-3.5">
      {features.map((f, i) => (
        <li key={i} className="flex flex-1 flex-col items-center">
          <svg viewBox="0 0 16 16" className="w-4 h-4" fill="none">{featureArt[f]}</svg>
          <span className="mt-0.5 h-1 w-0.5 bg-[#c4c4c4]" />
          <span className={`h-0.5 bg-[#c4c4c4] ${i === 0 ? 'w-1/2 self-end' : i === features.length - 1 ? 'w-1/2 self-start' : 'w-full'}`} />
        </li>
      ))}
    </ol>
    <svg viewBox="0 0 12 30" className="-ml-1.5 mt-2 h-[30px] w-3 shrink-0" fill="#555"><path d="M0 0h12v4L7 8v22H5V8L0 4z" /></svg>
    <button aria-label="Timeline settings" className="mt-3.5 mr-2.5 ml-auto"><Gear className="w-4 h-4" /></button>
  </footer>
);

const App: React.FC = () => {
  return (
    <div className="flex min-h-screen flex-col bg-black py-[23px]">
      <TitleBar />
      <TopBar />
      <Ribbon />

      {/* Canvas */}
      <main className="relative flex flex-1 flex-col overflow-hidden bg-white pb-1">
        <Model />
        <ViewCube />
        <aside className="relative ml-1 flex w-[281px] flex-1 flex-col pt-[5px]">
          <PanelHeader title="BROWSER" open />
          <BrowserTree />
          <div className="mt-auto"><PanelHeader title="COMMENTS" /></div>
        </aside>
        <NavBar />
      </main>

      <Timeline />
    </div>
  );
};

export default App;
